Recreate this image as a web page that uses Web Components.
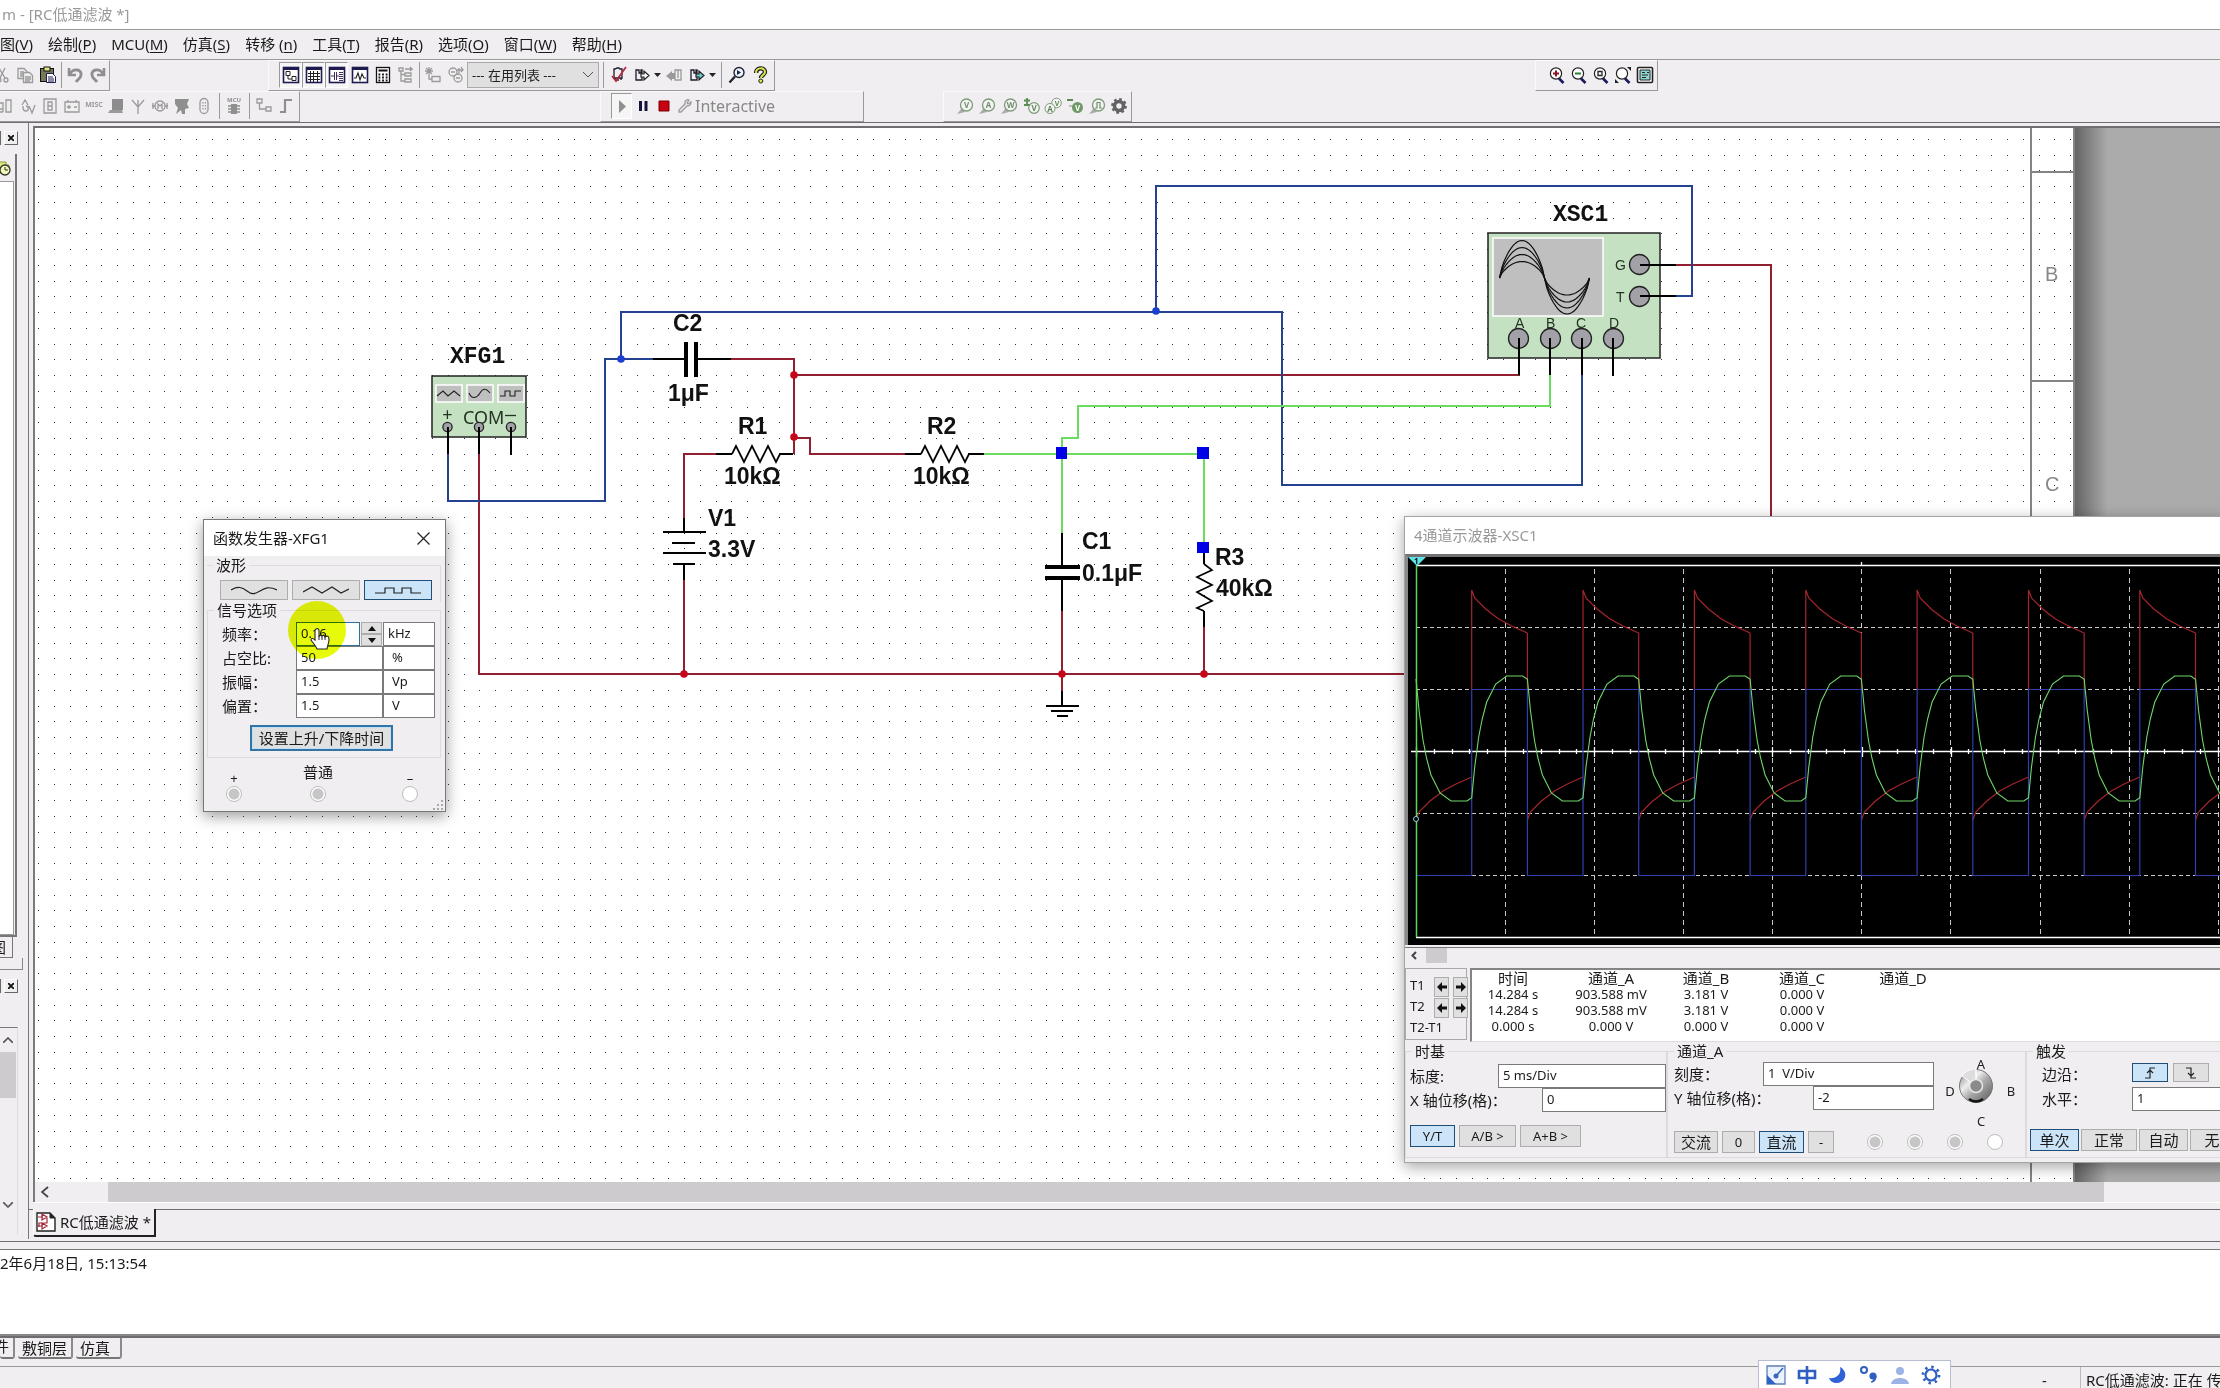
<!DOCTYPE html>
<html lang="zh-CN">
<head>
<meta charset="utf-8">
<title>RC低通滤波</title>
<style>
html,body{margin:0;height:100%;overflow:hidden}
body{font:15px/20px "Noto Sans","Noto Sans CJK SC",sans-serif;color:#1a1a1a;background:#f0eef0}
</style>
</head>
<body>
<circuit-app></circuit-app>
<script>
const BASE = `*{box-sizing:border-box}
button,input,select{font:inherit;color:inherit;margin:0;border-radius:0;outline:0}
button{padding:0;cursor:default}
svg{display:block}`;

function define(name, css, html, setup) {
  customElements.define(name, class extends HTMLElement {
    constructor() {
      super();
      this.attachShadow({ mode: "open" });
    }
    connectedCallback() {
      if (this.ready) return;
      this.ready = true;
      const body = typeof html === "function" ? html(this) : html;
      this.shadowRoot.innerHTML = `<style>${BASE}${css}</style>${body}`;
      if (setup) setup(this.shadowRoot, this);
    }
  });
}

/* ---------- icons, drawn on an 18 x 18 grid ---------- */
const K = 'fill="none" stroke="#1b1b2a" stroke-width="1.3"';
const G = 'fill="none" stroke="#9a9a9a" stroke-width="1.3"';
const NAVY = '<rect x="1.5" y="1.5" width="15" height="15" fill="#fff" stroke="#1c1a4e" stroke-width="1.6"/><path d="M1.5 3h15" stroke="#1c1a4e" stroke-width="2"/>';
const LENS = '<path d="M11 12.5l4.5 4.5" stroke="#1c1a5e" stroke-width="2.6"/><circle cx="8" cy="7.5" r="5.6" fill="#fff" stroke="#222" stroke-width="1.2"/>';
const probe = (t) => `<path d="M1 17l5-6 3 4z" fill="#aaa"/><circle cx="10.5" cy="8" r="6" fill="#f4f4f4" stroke="#7d9c78" stroke-width="1.3"/><text x="10.5" y="11" text-anchor="middle" font-size="8" font-weight="700" fill="#6f8f6a">${t}</text>`;
const ICONS = {
  cut: `<path ${G} d="M12 2L7 12M6 2l6 10"/><circle cx="6" cy="14" r="2" ${G}/><circle cx="13" cy="14" r="2" ${G}/>`,
  copy: `<path ${G} d="M2 2.500h6l3 3v7H2zM4 6h4M4 8h5M4 10h5"/><path d="M7.500 6.500h6l3 3v7h-9z" fill="#f0eef0" stroke="#9a9a9a" stroke-width="1.300"/><path ${G} d="M9 11h6M9 13h6M9 15h5"/>`,
  paste: `<rect x="1.500" y="2.500" width="13" height="13" fill="#77785a" stroke="#111"/><rect x="5" y="1" width="6" height="4" fill="#e6e67e" stroke="#111"/><path d="M7.500 7.500h6l3 3v6h-9z" fill="#fff" stroke="#1c1a4e"/><path d="M9 11h5M9 13h6M9 15h6" stroke="#1c1a4e"/>`,
  undo: `<path d="M3 2v7h7" fill="none" stroke="#8f8f8f" stroke-width="2.600"/><path d="M4 8c3-6 12-5 11 1 0 3-3 4-5 7" fill="none" stroke="#8f8f8f" stroke-width="2.800"/>`,
  redo: `<path d="M15 2v7H8" fill="none" stroke="#8f8f8f" stroke-width="2.600"/><path d="M14 8C11 2 2 3 3 9c0 3 3 4 5 7" fill="none" stroke="#8f8f8f" stroke-width="2.800"/>`,
  hier: NAVY + `<path d="M4 5.500h4v4H4zM10 10.500h4v4h-4zM6 10v3h4" fill="none" stroke="#222"/>`,
  grid: NAVY + `<path d="M3 7.500h12M3 10.500h12M3 13.500h12M5.500 5v11M8.500 5v11M12.500 5v11" stroke="#222"/>`,
  comp: NAVY + `<path d="M3 10h3M6.500 6v8M8.500 6v8M9 10h2M11 6.500h4M11 8.500h4M11 10.500h4M11 12.500h4M11 14.500h4" stroke="#433060"/>`,
  graph: NAVY + `<path d="M3 12h2l2-5 2 7 2-6 2 4h2" fill="none" stroke="#222" stroke-width="1.100"/>`,
  calc: `<rect x="2.500" y="1.500" width="13" height="15" fill="#fff" stroke="#111" stroke-width="1.300"/><path d="M4.500 4.500h9" stroke="#111" stroke-width="2"/><path d="M4.500 8.500h9M4.500 11.500h9M4.500 14.500h9" stroke="#111" stroke-width="2" stroke-dasharray="1.800 1.800"/>`,
  tree: `<path ${G} d="M2 2h4v3H2zM8 3h7l-2-2m2 2l-2 2M8 7h6v3H8zM8 13h6v3H8zM4 5v10h4M4 8.500h4"/>`,
  spark: `<path ${G} d="M5 1v8M1 5h8M2 2l6 6M8 2L2 8M8 10.500h8v5H8zM5 9v4h3"/>`,
  gates: `<circle cx="6" cy="6" r="4" ${G}/><circle cx="11" cy="12" r="4" ${G}/><path ${G} d="M4 6h4M9 12h4M12 2v5M10 4h6M14 1l2 3-2 2"/>`,
  check: `<path ${K} d="M5 3h-1v9h8V3h-2l-1-1H7zM5 14v-2M8 15v-2M11 14v-2"/><path d="M2 10l4 5L16 1" fill="none" stroke="#b3273c" stroke-width="1.700"/>`,
  fwd: `<path ${K} d="M3 4h3v3h2V4h1v10H3z"/><path d="M8 8h3V5l5 4.500-5 4.500v-3H8z" fill="#fff" stroke="#222" stroke-width="1.200"/>`,
  back: `<path ${G} d="M10 4h6v10h-6zM13 4v8"/><path d="M10 7v6H7v2L1 10l6-5v2z" fill="#9a9a9a"/>`,
  fwd2: `<path ${K} d="M3 4h3v3h2V4h1v10H3z"/><path d="M8 8h3V5l5 4.500-5 4.500v-3H8z" fill="#6cc9cf" stroke="#222" stroke-width="1.200"/>`,
  find: `<circle cx="11" cy="6.500" r="5" fill="#e9f4ff" stroke="#223" stroke-width="1.400"/><path d="M9 4v5l4-2.500z" fill="#224"/><path d="M7 10.500L1.500 16.500" stroke="#223" stroke-width="2.400"/>`,
  help: `<path d="M5 7c0-6 9-6 9-1 0 3-4 3-4 6" fill="none" stroke="#222" stroke-width="4.400"/><path d="M5 7c0-6 9-6 9-1 0 3-4 3-4 6" fill="none" stroke="#dbe84a" stroke-width="2"/><circle cx="9.800" cy="15" r="2" fill="#dbe84a" stroke="#222"/>`,
  bus: `<path ${G} d="M6 15V6H2M6 12H2v3h4M9 15V3h5v12z"/>`,
  wave: `<path ${G} d="M3 8l3-5 3 5M4 9c0 3 0 5 3 5s3-5 0-5M10 9l3 7 3-8"/>`,
  cell: `<path ${G} d="M3 2h12v14H3zM7 5h4v4H7zM7 9h4v4H7z"/>`,
  batt: `<path ${G} d="M2 5h14v10H2zM5 5V3M13 5V3M4 10h4M6 8v4M11 10h3"/>`,
  misc: `<text x="9" y="10" text-anchor="middle" font-size="7" font-weight="700" fill="#9a9a9a">MISC</text>`,
  block: `<path d="M5 2h11v11H5z" fill="#8d8d8d"/><path d="M1 16h15l-1-3H3z" fill="#9a9a9a"/>`,
  ant: `<path ${G} d="M9 3v14M3 3l6 7 6-7"/>`,
  motor: `<circle cx="9" cy="9" r="5" ${G}/><path ${G} d="M1 9h3M14 9h3M2 6v6M16 6v6M7 12V7l2 2 2-2v5"/>`,
  chip: `<path d="M2 2h14l-2 5 2 4-4 1v5h-3l-1-4-5 4 2-6-3-4z" fill="#8f8f8f"/>`,
  conn: `<rect x="5" y="1.500" width="8" height="15" rx="4" ${G}/><path ${G} d="M8 5v8M10.500 5v8" stroke-dasharray="1.500 1.500"/>`,
  mcu: `<text x="9" y="5" text-anchor="middle" font-size="6" font-weight="700" fill="#8f8f8f">MCU</text><path d="M6 7h6v10H6z" fill="#8f8f8f"/><path d="M3 9h12M3 12h12M3 15h12" stroke="#8f8f8f" stroke-width="1.400"/>`,
  sub: `<path ${G} d="M2 2h5v4H2zM11 10h5v4h-5zM4.500 6v6H11"/>`,
  step: `<path d="M3 15h5V3h7" fill="none" stroke="#8f8f8f" stroke-width="2.200"/>`,
  play: `<path d="M6 3v13l7-6.500z" fill="#8f8f8f"/>`,
  pause: `<path d="M5 4h3v10H5zM10.500 4h3v10h-3z" fill="#14143c"/>`,
  stop: `<path d="M4 4h10v10H4z" fill="#c9000e" stroke="#7a0008"/>`,
  wrench: `<path d="M3 13l6-6c-1-3 2-5 4-4l-2 3 1 1 3-2c0 3-2 4-4 4l-6 6-2 0z" fill="#eee" stroke="#9a9a9a" stroke-width="1.300"/>`,
  pv: probe("V"), pa: probe("A"), pw: probe("W"),
  pd: `<path d="M5 1v6M2 3.500h6M2 8h6" stroke="#5d8a55" stroke-width="1.800"/><circle cx="12" cy="11" r="5.300" fill="#f4f4f4" stroke="#7d9c78" stroke-width="1.200"/><text x="12" y="14" text-anchor="middle" font-size="8" font-weight="700" fill="#5d8a55">V</text>`,
  pav: `<circle cx="12.500" cy="6" r="4.800" fill="#f4f4f4" stroke="#7d9c78"/><text x="13" y="9" text-anchor="middle" font-size="7" font-weight="700" fill="#5d8a55">V</text><circle cx="6" cy="11.500" r="5" fill="#f4f4f4" stroke="#7d9c78"/><text x="6" y="14.500" text-anchor="middle" font-size="8" font-weight="700" fill="#5d8a55">A</text>`,
  pref: `<path d="M1 3h6" stroke="#5d8a55" stroke-width="2"/><path d="M3 9h4" stroke="#7d9c78"/><circle cx="11.500" cy="10.500" r="5.500" fill="#6f9a68"/><text x="11.500" y="13.500" text-anchor="middle" font-size="8" font-weight="700" fill="#fff">V</text>`,
  pdig: `<path d="M1 17l5-6 3 4z" fill="#aaa"/><circle cx="10.500" cy="8" r="6" fill="#f4f4f4" stroke="#7d9c78" stroke-width="1.300"/><path d="M7 11h2V5.500h3V11h2" fill="none" stroke="#6f8f6a" stroke-width="1.200"/>`,
  gear: `<circle cx="9" cy="9" r="4.500" fill="none" stroke="#626262" stroke-width="3.600"/><circle cx="9" cy="9" r="6.800" fill="none" stroke="#626262" stroke-width="2.200" stroke-dasharray="2.700 2.640"/>`,
  zin: LENS + `<path d="M5 7.500h6M8 4.500v6" stroke="#8d1420" stroke-width="2"/>`,
  zout: LENS + `<path d="M5 7.500h6" stroke="#2f7a35" stroke-width="2"/>`,
  zarea: LENS + `<path d="M6 5.500h4v4H6z" fill="none" stroke="#222" stroke-width="1.300"/>`,
  zfit: LENS + `<path d="M13 1h4v4zM1 13v4h4z" fill="#222"/>`,
  zfull: `<rect x="1.500" y="1.500" width="15" height="15" rx="1" fill="#fff" stroke="#222" stroke-width="1.600"/><path d="M4 4h10v10H4z" fill="#8fd6d2" stroke="#222"/><path d="M6 6.500h3M6 9h6M6 11.500h4M11 6.500h2" stroke="#222"/>`
};

define("tool-button", `
:host{display:flex;flex:none}
button{width:var(--w,22px);height:26px;display:grid;place-items:center;background:none;border:1px solid transparent}
:host([pressed]) button{border-color:#999 #fff #fff #999;background:#f7f6f7}
`, (h) => `<button type="button" aria-label="${h.getAttribute("icon")}"><svg width="18" height="18" viewBox="0 0 18 18" aria-hidden="true">${ICONS[h.getAttribute("icon")]}</svg></button>`);

define("tool-sep", `
:host{display:flex;flex:none;width:4px;height:26px;justify-content:center}
:host([wide]){width:8px}
i{width:1px;background:#999}`, `<i></i>`);

define("tool-caret", `
:host{display:grid;place-items:center;flex:none;width:9px;height:26px}
`, `<svg width="7" height="4" aria-hidden="true"><path d="M0 0h7L3.500 4z" fill="#222"/></svg>`);

define("tool-group", `
:host{display:flex;flex:none;align-items:center;height:31px;border:1px solid;border-color:#fbfafb #999 #999 #fbfafb;padding-left:10px;padding-bottom:2px}
:host([cut]){border-left:0;padding-left:0}
`, `<slot></slot>`);

const tools = (s) => s.split(" ").map(n => n === "|" ? "<tool-sep></tool-sep>" : n === "||" ? "<tool-sep wide></tool-sep>" : n === "v" ? "<tool-caret></tool-caret>" : n[0] === "*" ? `<tool-button pressed icon="${n.slice(1)}"></tool-button>` : `<tool-button icon="${n}"></tool-button>`).join("");

define("tool-rows", `
:host{display:block;flex:none;border-bottom:1px solid #6e6c6e;height:63px}
.row{display:flex;height:31px}
.w23{--w:23px}
.list{display:grid;width:132px;height:26px}
.list>*{grid-area:1/1}
select{appearance:none;border:1px solid #aaa;background:#e1e0e1;font-size:13px;padding:0 4px;color:#222}
.list svg{justify-self:end;align-self:center;margin-right:6px;pointer-events:none}
.a1{width:110px;overflow:hidden}.a1 .in{margin-left:-10px}
.a2{width:300px;overflow:hidden}.a2 .in{margin-left:-5px}
.in{display:flex;align-items:center}
.b1{width:507px;margin-left:158px}.c1{width:123px;margin-left:760px}
.b2{width:264px;margin-left:300px;color:#888;font-size:16px;--w:21px}.c2{width:189px;margin-left:79px}
`, `<div class="row">
<tool-group cut class="a1 w23"><div class="in">${tools("cut copy paste | undo redo")}</div></tool-group>
<tool-group class="b1 w23">${tools("*hier *grid *comp graph calc tree | spark gates")}
<span class="list"><select aria-label="在用列表"><option>--- 在用列表 ---</option></select><svg width="10" height="6" aria-hidden="true"><path d="M0 0l5 5 5-5" fill="none" stroke="#555"/></svg></span>
${tools("|| check fwd v back fwd2 v || find help")}</tool-group>
<tool-group class="c1">${tools("zin zout zarea zfit zfull")}</tool-group>
</div><div class="row">
<tool-group cut class="a2"><div class="in">${tools("bus wave cell batt misc block ant motor chip conn || mcu || sub step")}</div></tool-group>
<tool-group class="b2">${tools("*play pause stop wrench")}<span>Interactive</span></tool-group>
<tool-group class="c2">${tools("pv pa pw pd pav pref pdig gear")}</tool-group>
</div>`);

define("title-bar", `:host{display:flex;flex:none;align-items:center;height:30px;padding:0 2px 2px;background:#fff;color:#999;border-bottom:1px solid #999;white-space:pre;overflow:hidden}`, `<slot></slot>`);

define("menu-bar", `
:host{display:flex;flex:none;height:30px;align-items:center;border-bottom:1px solid #999;padding-bottom:2px}
nav{display:flex;gap:15px}
button{border:0;background:none;white-space:nowrap;line-height:20px}
u{text-underline-offset:2px}
`, `<nav>${["图(V)", "绘制(P)", "MCU(M)", "仿真(S)", "转移 (n)", "工具(T)", "报告(R)", "选项(O)", "窗口(W)", "帮助(H)"].map(t => `<button type="button">${t.replace(/\((.)\)/, "(<u>$1</u>)")}</button>`).join("")}</nav>`);

define("side-dock", `
:host{display:flex;flex-direction:column;flex:none;width:29px;border-right:1px solid #777;overflow:hidden;margin-bottom:2px}
.bar{display:flex;gap:3px;height:14px;flex:none}
.bar.first{margin-top:8px}
.bar button{width:14px;height:14px;border:1px solid;border-color:#fff #666 #666 #fff;background:#f0eef0;display:grid;place-items:center}
.bar i{width:1px;background:#666}
.tree{flex:1;margin-top:9px;width:17px;border-right:2px solid #777;border-bottom:2px solid #777;display:flex;flex-direction:column}
.head{height:27px;display:flex;align-items:center}
.leaf{flex:1;background:#fff;border:1px solid #999;border-left:0;margin-right:1px}
.tab{width:13px;height:21px;border:1px solid #777;border-width:0 1px 1px 0;display:flex;justify-content:flex-end;padding-right:6px;overflow:hidden}
.edge{width:23px;height:12px;border:1px solid #888;border-width:0 1px 1px 0;margin-bottom:9px;flex:none}
.low{flex:none;height:208px;width:18px;margin-top:34px;border:1px solid #777;border-width:1px 0 0;border-right:1px solid #ddd;display:flex;flex-direction:column}
.low button{height:24px;width:16px;border:0;background:none;display:grid;place-items:center}
.thumb{height:46px;width:16px;background:#cdcbcd}
.sp{flex:1}
.pad{height:4px}
.low .pad{height:18px}
`, `<div class="bar first"><i></i><button type="button" aria-label="关闭"><svg width="6" height="6"><path d="M0 0l6 6M6 0L0 6" stroke="#111" stroke-width="1.800"/></svg></button></div>
<div class="tree"><div class="head"><svg width="12" height="18" viewBox="0 0 12 18"><path d="M0 3h6v3h3v8H0" fill="#dce87c" stroke="#8a9a3c"/><circle cx="5" cy="11" r="5" fill="#f1f7b4" stroke="#333" stroke-width="1.300"/><path d="M5 8v3h3" fill="none" stroke="#333"/></svg></div><div class="leaf"></div></div>
<div class="tab">图</div><div class="edge"></div>
<div class="bar"><i></i><button type="button" aria-label="关闭"><svg width="6" height="6"><path d="M0 0l6 6M6 0L0 6" stroke="#111" stroke-width="1.800"/></svg></button></div>
<div class="low"><button type="button" aria-label="上"><svg width="10" height="6"><path d="M0 6l5-5 5 5" fill="none" stroke="#555" stroke-width="1.600"/></svg></button><div class="thumb"></div><div class="sp"></div><button type="button" aria-label="下"><svg width="10" height="6"><path d="M0 0l5 5 5-5" fill="none" stroke="#555" stroke-width="1.600"/></svg></button><div class="pad"></div></div><div class="pad"></div>`);

/* ---------- schematic sheet ---------- */
const range = (n) => Array.from({ length: n }, (_, i) => i);
const dots = range(130).map(i => range(67).map(j => `M${Math.round(38.4 + i * 15.75)} ${Math.round(139 + j * 15.74)}h1v1h-1z`).join("")).join("");
const wire = (c, ...ds) => `<path d="${ds.join("")}" fill="none" stroke="${c}" stroke-width="2"/>`;
const dot = (c, x, y) => `<circle cx="${x}" cy="${y}" r="3.800" fill="${c}"/>`;
const label = (x, y, t) => `<text x="${x}" y="${y}" class="l">${t}</text>`;
const jack = (x, y, r) => `<circle cx="${x}" cy="${y}" r="${r}" fill="#a3a1a8" stroke="#222" stroke-width="1.300"/>`;
const BLUE = "#24428f", RED = "#911f30", GREEN = "#6bdc5f", BLK = "#000";
const zig = (x) => `M${x} 454l4 -8 8 16 8 -16 8 16 8 -16 8 16 4 -8`;
const swing = (top, low) => range(41).map(i => {
  const t = i / 40, s = Math.sin(2 * Math.PI * t), a = Math.pow(Math.abs(s), 0.7);
  return `${i ? "L" : "M"}${(1499.5 + 90 * t).toFixed(1)} ${(278 + (s > 0 ? top - 278 : low - 278) * a).toFixed(1)}`;
}).join("");

define("schematic-sheet", `
:host{display:block;flex:1;min-height:0;background:#fff;overflow:hidden}
svg{width:100%;height:100%}
text{font-family:"Liberation Sans",sans-serif}
.l{font-size:23px;font-weight:700;fill:#111}
.m{font-family:"Liberation Mono",monospace;font-size:23px;font-weight:700;fill:#111}
.s{font-size:14px;fill:#243424}
.z{font-size:20px;fill:#888}
.c{font-family:"Noto Sans",sans-serif;font-size:18px;fill:#243424}
`, `<svg aria-label="电路图"><defs><linearGradient id="sh"><stop offset="0" stop-color="#606060"/><stop offset="1" stop-color="#ababab"/></linearGradient></defs>
<g transform="translate(-35 -128)">
<rect x="2073" y="100" width="600" height="1200" fill="#ababab"/><rect x="2073" y="100" width="35" height="1200" fill="url(#sh)"/>
<path d="${dots}" fill="#333" shape-rendering="crispEdges"/>
<path d="M2031 120v1100M2031 172h43M2031 381h43M2074 120v1100" fill="none" stroke="#858385" stroke-width="2"/>
<text x="2045" y="281" class="z">B</text><text x="2045" y="491" class="z">C</text>
<rect x="432" y="376" width="94" height="61" fill="#c4e2c1" stroke="#222" stroke-width="1.500"/>
<g fill="#bfbfbf" stroke="#fff" stroke-width="1.500"><path d="M436 385h26v17h-26zM467 385h26v17h-26zM498 385h26v17h-26z"/></g>
<g fill="none" stroke="#222" stroke-width="1.100"><path d="M437 396l6-5 5 5 6-5 6 5M469 393c3 7 8 5 11 0s6-5 10 0M500 396h5v-5h5v5h5v-5h6"/></g>
<text x="447.500" y="421" class="c" text-anchor="middle">+</text><text x="463" y="424" class="c">COM</text><path d="M505 415.500h11" stroke="#243424" stroke-width="1.300"/>
${jack(447.5, 427, 4.6)}${jack(479, 427, 4.6)}${jack(511, 427, 4.6)}
<text x="450" y="363" class="m">XFG1</text>
<rect x="1488" y="233" width="172" height="125" fill="#c4e2c1" stroke="#222" stroke-width="1.500"/>
<rect x="1493" y="238" width="110" height="78" fill="#bfbfbf" stroke="#fff" stroke-width="1.500"/>
<g fill="none" stroke="#111" stroke-width="1.200">${[[240.5, 314], [247.5, 308], [254.5, 302], [261.5, 295]].map(([a, b]) => `<path d="${swing(a, b)}"/>`).join("")}</g>
<text x="1615" y="270" class="s">G</text><text x="1616" y="302" class="s">T</text><text x="1515" y="328" class="s">A</text><text x="1546" y="328" class="s">B</text><text x="1576" y="328" class="s">C</text><text x="1609" y="328" class="s">D</text>
${jack(1639.5, 264.5, 10)}${jack(1639.5, 296.5, 10)}${[1518.5, 1550.5, 1581.5, 1613.5].map(x => jack(x, 338.5, 10)).join("")}
<text x="1553" y="221" class="m">XSC1</text>
${wire(RED, "M731 359H794V454", "M794 375H1519", "M794 438H810V454H905", "M716 454H684V518", "M684 580V674", "M479 454V674H1420", "M1062 611V691", "M1204 627V674", "M1676 265H1771V530")}
${wire(BLUE, "M1156 312V186H1692V296H1676", "M621 359V312H1282V485H1582V375", "M653 359H605V501H448V454")}
${wire(GREEN, "M984 454H1204V550", "M1062 533V438H1078V406H1550V375")}
${wire(BLK, "M448 427V454M479 427V454M511 427V455", "M653 359H686M696 359H731", "M716 454H732M779 454H793", "M905 454H921M968 454H984", "M684 518V531M663 532H706M672 543H695M663 553H706M673 564H695M684 564V580", "M1062 533V566M1062 578V611M1062 691V705M1046 706H1079M1051 711H1073M1057 716H1068", "M1204 550V564M1204 611V627", "M1519 338V375M1550 338V375M1582 338V375M1613 338V376M1640 265H1676M1640 296H1676")}
<path d="${zig(732)}${zig(921)}M1204 564l8 6-15 7 15 8-15 7 15 9-15 7 7 3" fill="none" stroke="#000" stroke-width="1.700"/>
<path d="M686 342v35M696 342v35M1045 567h35M1045 578h35" stroke="#000" stroke-width="4"/>
${dot("#1b3fd0", 621, 359)}${dot("#1b3fd0", 1156, 311)}${[[794, 375], [794, 437], [684, 674], [1062, 674], [1204, 674]].map(p => dot("#c8061a", ...p)).join("")}
<path d="M1056 447h11v12h-11zM1197 447h12v12h-12zM1197 542h12v11h-12z" fill="#0000e6"/>
${label(673, 331, "C2")}${label(668, 401, "1μF")}${label(738, 434, "R1")}${label(724, 484, "10kΩ")}${label(927, 434, "R2")}${label(913, 484, "10kΩ")}${label(708, 526, "V1")}${label(708, 557, "3.3V")}${label(1082, 549, "C1")}${label(1082, 581, "0.1μF")}${label(1215, 565, "R3")}${label(1216, 596, "40kΩ")}
</g></svg>`);

define("work-area", `
:host{display:flex;flex-direction:column;flex:1;min-width:0;padding-top:3px}
.frame{flex:1;min-height:0;display:flex;flex-direction:column;margin-left:4px;border:2px solid #6f6d70;border-width:2px 0 0 2px;border-left-color:#7b797c}
.scroll{display:flex;height:20px;flex:none;background:#f0eef0}
.scroll button{width:73px;border:0;background:none;text-align:left;padding-left:6px}
.thumb{flex:1;background:#cdcbcd}
.rest{width:116px}
.line{height:7px;border-top:1px solid #fff;margin-left:4px;flex:none}
.tabs{flex:none;height:32px;border-top:1px solid #6e6c6e;display:flex}
.tab{display:flex;align-items:center;gap:4px;height:28px;width:123px;margin:-1px 0 0 4px;padding-left:2px;background:#f0eef0;border:2px solid #222;border-width:0 2px 2px 1px;border-left-color:#fff;border-radius:0 0 0 3px;white-space:nowrap}
`, `<div class="frame"><schematic-sheet></schematic-sheet><div class="scroll"><button type="button" aria-label="左"><svg width="8" height="12"><path d="M7 1L1 6l6 5" fill="none" stroke="#444" stroke-width="1.800"/></svg></button><div class="thumb"></div><div class="rest"></div></div></div>
<div class="line"></div>
<div class="tabs"><button class="tab" type="button"><svg width="20" height="20" viewBox="0 0 20 20"><path d="M1 1h13l5 5v13H1z" fill="#fff" stroke="#222" stroke-width="1.400"/><path d="M14 1v5h5" fill="#222" stroke="#222"/><path d="M2 5h5M2 14h5M6 2v6l5-3zM6 11v6l5-3zM3 15v-4h8V6" fill="none" stroke="#a32438" stroke-width="1.200"/></svg><span>RC低通滤波 *</span></button></div>`);

define("log-panel", `
:host{display:block;flex:none;border-top:1px solid #6e6c6e;padding-top:7px}
.log{height:87px;background:#fff;border-top:1px solid #777;border-bottom:2px solid #888;padding-top:3px;overflow:hidden}
.tabs{display:flex;height:30px;border-top:2px solid #6e6c6e;gap:3px}
.tabs button{height:21px;border:1px solid #777;border-width:0 2px 2px 0;border-right-color:#8a8a8a;background:#f0eef0;border-radius:0 0 3px 3px;padding:0 4px;line-height:16px;white-space:nowrap}
.tabs button:first-child{width:15px;display:flex;justify-content:flex-end}
.tabs button:last-child{padding-right:10px}
`, `<div class="log">2年6月18日, 15:13:54</div><div class="tabs"><button type="button">件</button><button type="button">敷铜层</button><button type="button">仿真</button></div>`);

define("status-line", `
:host{display:flex;flex:none;justify-content:flex-end;height:22px;border-top:1px solid #999;overflow:hidden;white-space:nowrap}
span{line-height:26px}
.dash{width:38px}
.msg{border-left:1px solid #bbb;padding-left:5px;width:140px}
`, `<span class="dash">-</span><span class="msg">RC低通滤波: 正在 传</span>`);

define("ime-strip", `
:host{position:absolute;left:1758px;bottom:0;width:193px;height:28px;background:#fff;border:1px solid #b9bdd2;border-bottom:0;display:flex;align-items:center;gap:9px;padding-left:6px}
button{width:22px;height:26px;border:0;background:none;display:grid;place-items:center}
`, () => {
  const b = (n, s) => `<button type="button" aria-label="${n}"><svg width="20" height="20" viewBox="0 0 20 20">${s}</svg></button>`;
  return b("输入法", `<path d="M1 1h18v18H1z" fill="#eaf2fd" stroke="#5d7fb8" stroke-width="1.300"/><path d="M1 10l9 9H1z" fill="#2f62c8"/><circle cx="10" cy="11" r="2.500" fill="#3b66b8"/><path d="M10 11l7-8" stroke="#3b66b8" stroke-width="1.600"/>`)
    + b("中文", `<path d="M2 6h16v7H2zM10 1v18" fill="none" stroke="#2f5fc0" stroke-width="2.600"/>`)
    + b("全半角", `<path d="M12 2c8 4 7 15-3 16-4 0-7-2-8-5 6 1 13-3 11-11z" fill="#2f62d6"/>`)
    + b("标点", `<circle cx="5" cy="5" r="3" fill="none" stroke="#2f5fc0" stroke-width="2"/><circle cx="14" cy="11" r="3.600" fill="#2f5fc0"/><path d="M17.500 11c0 4-2 6-5 7l-.500-1.500c2-1 2.500-2 2.500-4z" fill="#2f5fc0"/>`)
    + b("用户", `<circle cx="10" cy="6" r="4" fill="#9db3e6"/><path d="M1 19c1-8 17-8 18 0z" fill="#9db3e6"/>`)
    + b("设置", `<circle cx="10" cy="10" r="5.500" fill="none" stroke="#2f5fc0" stroke-width="2.200"/><circle cx="10" cy="10" r="8" fill="none" stroke="#2f5fc0" stroke-width="2.800" stroke-dasharray="2.400 3.883"/>`);
});

/* ---------- shared parts of the instrument windows ---------- */
define("group-box", `
:host{display:block;min-width:0}
fieldset{height:100%;margin:0;border:1px solid #dcdadc;padding:0;min-width:0}
:host([open]) fieldset{border-bottom:0;border-left:0}
legend{line-height:16px;padding:0 3px;margin-left:6px;white-space:nowrap}
`, (h) => `<fieldset><legend>${h.getAttribute("label")}</legend><slot></slot></fieldset>`);

define("value-field", `
:host{display:flex;align-items:center;height:24px}
label{flex:1;white-space:nowrap;line-height:20px}
input{flex:none;width:var(--fw,168px);height:24px;border:1px solid #7a7a7a;background:#fff;padding:0 0 2px 4px;font-size:13px}
:host([hot]) input{border-color:#2f6f9b}
`, (h) => `<label for="f">${h.getAttribute("label")}</label><input id="f" value="${h.getAttribute("value")}"><slot></slot>`);

define("push-key", `
:host{display:flex;flex:none}
button{width:100%;height:100%;border:1px solid #adadad;background:#e1e0e1;display:grid;place-items:center;line-height:18px;white-space:nowrap}
:host([on]) button{background:#cce4f7;border-color:#1f4e79}
:host([focus]) button{border:2px solid #3174a5;box-shadow:inset 0 0 0 1px #bfe0f5}
`, (h) => `<button type="button" aria-label="${h.getAttribute("name") || h.textContent}"><slot></slot></button>`);

define("jack-dot", `
:host{display:block;flex:none;width:16px;height:16px}
input{appearance:none;display:block;margin:0;width:16px;height:16px;border-radius:50%;border:1px solid #bdbdbd;background:radial-gradient(circle,#c6c6c6 0 5px,#fff 6px)}
input:disabled{background:#fff}
`, (h) => `<input type="radio" aria-label="${h.getAttribute("name")}" ${h.hasAttribute("empty") ? "disabled" : ""}>`);

define("function-generator", `
:host{position:absolute;left:203px;top:519px;width:243px;background:#f0eef0;border:1px solid #777;box-shadow:0 4px 14px rgba(0,0,0,.4);height:293px}
header{height:36px;background:#fff;display:flex;align-items:center;justify-content:space-between;padding:0 15px 0 9px}
header button{border:0;background:none;width:13px;height:13px}
.body{padding:1px 4px 0 3px}
.waves{display:flex;gap:4px;padding:7px 0 2px 13px}
.waves push-key{width:68px;height:20px}
.rows{padding:4px 3px 0 14px}
.row{display:flex}
value-field{width:161px;--fw:87px}
value-field[hot]{--fw:64px;width:138px}
.spin{display:flex;flex-direction:column;width:23px;padding:0 1px}
.spin push-key{height:12px}
.row>input{width:52px;height:24px;border:1px solid #7a7a7a;background:#fff;font-size:13px;padding:0 0 2px 8px}
.row:first-child>input{padding-left:4px}
.set{width:143px;height:26px;margin:7px auto 6px 28px}
footer{display:flex;align-items:flex-end;justify-content:space-between;padding:0 27px 0 22px;height:44px;line-height:16px}
footer div{display:flex;flex-direction:column;align-items:center;width:16px;font-size:13px}
footer .mid{font-size:15px;white-space:nowrap;gap:6px;margin-left:-8px}
.grip{position:absolute;right:1px;bottom:1px}
.glow{position:absolute;left:84px;top:81px;width:58px;height:58px;border-radius:50%;background:#e6fa0a;mix-blend-mode:multiply;pointer-events:none}
.hand{position:absolute;left:106px;top:107px;pointer-events:none}
`, () => {
  const w = (d) => `<svg width="46" height="10" aria-hidden="true"><path d="${d}" fill="none" stroke="#222" stroke-width="1.200"/></svg>`;
  return `<header><span>函数发生器-XFG1</span><button type="button" aria-label="关闭"><svg width="13" height="13"><path d="M.5 .5l12 12M12.500 .5l-12 12" stroke="#222" stroke-width="1.200"/></svg></button></header>
<div class="body"><group-box open label="波形"><div class="waves"><push-key name="正弦波">${w("M0 5c7-4 11-3 16 1s8 3 13 0 9-5 17-1")}</push-key><push-key name="三角波">${w("M0 7l9-5 10 6 10-6 9 6 8-4")}</push-key><push-key on name="方波">${w("M0 8h10V3h9v5h8V3h9v5h10")}</push-key></div></group-box>
<group-box label="信号选项"><div class="rows">
<div class="row"><value-field hot label="频率：" value="0.16"></value-field><div class="spin"><push-key name="增"><svg width="8" height="5"><path d="M0 5h8L4 0z" fill="#111"/></svg></push-key><push-key name="减"><svg width="8" height="5"><path d="M0 0h8L4 5z" fill="#111"/></svg></push-key></div><input aria-label="频率单位" value="kHz"></div>
<div class="row"><value-field label="占空比:" value="50"></value-field><input aria-label="占空比单位" value="%"></div>
<div class="row"><value-field label="振幅：" value="1.5"></value-field><input aria-label="振幅单位" value="Vp"></div>
<div class="row"><value-field label="偏置：" value="1.5"></value-field><input aria-label="偏置单位" value="V"></div>
<push-key focus class="set">设置上升/下降时间</push-key></div></group-box></div>
<footer><div>+<jack-dot name="+"></jack-dot></div><div class="mid">普通<jack-dot name="普通"></jack-dot></div><div>–<jack-dot empty name="-"></jack-dot></div></footer>
<svg class="grip" width="11" height="11"><path d="M8 1h2v2H8zM8 5h2v2H8zM4 5h2v2H4zM8 9h2v2H8zM4 9h2v2H4zM0 9h2v2H0z" fill="#aaa"/></svg>
<div class="glow"></div>
<svg class="hand" width="20" height="24" viewBox="0 0 20 24"><path d="M6 2c2-1 3 0 3 2v5l2-1 1 1 2-1 1 2 2-1c2 0 2 2 2 4 0 4-2 6-2 9H7c-1-3-4-6-6-9 0-2 2-2 4 0V4c0-1 0-2 1-2z" fill="#fff" stroke="#222" stroke-width="1.100"/><path d="M9 9v4M12 9v4M15 10v3" stroke="#222"/></svg>`;
});

/* ---------- oscilloscope ---------- */
const HP = 55.68, X0 = 1417;
const path = (pts) => pts.map(([x, y], i) => (i ? "L" : "M") + x.toFixed(1) + " " + y).join("");
const traces = { r: [], g: [], b: [] };
const DECAY = [[0, 820], [3, 812], [14, 801], [27, 791], [40, 784], [HP, 777]];
const FALL = [[0, 679], [3, 710], [7, 740], [10.5, 758], [15, 775], [24, 793], [35, 801], [51, 801], [HP - .5, 798]];
for (let k = 0; k < 16; k++) {
  const x = X0 + k * HP, up = k % 2 === 1;
  traces.b.push([x, up ? 689.5 : 875.5], [x + HP, up ? 689.5 : 875.5]);
  for (const [dx, y] of DECAY) traces.r.push([x + dx, up ? 1410 - y : y]);
  for (const [dx, y] of FALL) traces.g.push([x + dx, up ? 1477 - y : y]);
}
/* the red trace is hidden by the blue one below the upper blue level */
const redArcs = range(16).map(k => path(traces.r.slice(k * 6, k * 6 + 6))).join("");
const redEdges = range(15).map(k => {
  const x = (X0 + (k + 1) * HP).toFixed(1);
  return k % 2 ? `M${x} 633V689` : `M${x} 590V689`;
}).join("");
define("scope-plot", `
:host{display:block;height:391px;background:#000;border-top:3px solid #737173;border-left:3px solid #8a888a;overflow:hidden}
svg{width:100%;height:100%}
`, `<svg aria-label="波形"><g transform="translate(-1409 -557)" fill="none">
<g stroke="#c8c8c8" stroke-dasharray="5 4">${range(10).map(i => `<path d="M${Math.round(1416.8 + 89.1 * (i + 1)) + .5} 569V937"/>`).join("")}</g>
<g stroke="#c8c8c8" stroke-dasharray="4 3">${[627.5, 689.5, 813.5, 875.5].map(y => `<path d="M1417 ${y}H2300"/>`).join("")}</g>
<path d="M1417 565.500H2300M1412 751.500H2300M1417 937.500H2300M1862.500 562v4${range(48).map(i => `M${Math.round(1417 + 17.82 * i) + .5} ${i % 5 ? 749 : 747}v${i % 5 ? 5 : 10}`).join("")}" stroke="#fff" stroke-width="1.300"/>
<path d="${redArcs}${redEdges}" stroke="#a3262c" stroke-width="1.200"/>
<path d="${path(traces.b)}" stroke="#2f3fae" stroke-width="1.200"/>
<path d="${path(traces.g)}" stroke="#70d868" stroke-width="1.100"/>
<path d="M1417.500 565V937" stroke="#5fd35a" stroke-width="1.500"/>
<path d="M1409 557h18l-9 9z" fill="#5fe3e6"/><text x="1415" y="564" font-size="8" font-weight="700" fill="#111">1</text>
<circle cx="1417" cy="819" r="2.500" fill="#000" stroke="#8fd0e0"/>
</g></svg>`);

define("oscilloscope-window", `
:host{position:absolute;left:1404px;right:-90px;top:516px;height:647px;background:#f0eef0;border:1px solid #a5a3a5;box-shadow:0 4px 14px rgba(0,0,0,.35);display:flex;flex-direction:column}
header{height:37px;flex:none;background:#fff;color:#999;padding:8px 9px 0;line-height:20px}
scope-plot{flex:none}
.scroll{height:21px;flex:none;border-top:1px solid #777;margin-top:2px;display:flex;align-items:flex-start}
.scroll button{width:21px;height:14px;border:0;background:none;padding-left:6px}
.scroll i{width:21px;height:15px;background:#cdcbcd}
.read{display:flex;gap:3px;height:74px;flex:none}
.cur{width:62px;height:72px;border:1px solid #aaa;padding:8px 0 0 4px;font-size:13px;display:grid;grid-template-columns:20px 15px 15px;column-gap:4px;grid-template-rows:20px 20px 20px;row-gap:1px;line-height:17px}
.cur push-key{height:20px}
.cur .wide{grid-column:1/4}
.tbl{flex:1;background:#fff;border:2px solid #858385;border-right:0;border-bottom:1px solid #ddd}
table{border-collapse:collapse;table-layout:fixed;width:474px;text-align:center}
th{font-weight:400;line-height:16px;padding:0}
td{padding:0;font-size:13px;line-height:16px;white-space:nowrap}
.groups{display:grid;grid-template-columns:262px 359px 1fr;height:116px;padding-top:1px}
.keys{display:flex;gap:4px}
.keys push-key{height:22px;font-size:13px}
.keys push-key.cn{font-size:15px}
.tb{padding:5px 0 0 4px}
.tb value-field+value-field{--fw:124px}
.tb .keys{margin-top:13px}
.ch{padding-left:6px}
.top{display:flex;height:72px}
.fields{width:260px;padding-top:3px}
.fields value-field{--fw:171px}.fields value-field+value-field{--fw:121px}
.knob{margin-left:4px}
.dots{display:flex;gap:24px;align-items:center;margin-left:29px}
.tr{padding:4px 0 0 3px}
.edge{display:flex;padding-left:12px;height:24px;gap:5px}
.edge span{width:85px;line-height:22px}
.edge push-key{width:36px;height:19px}
.tr value-field{width:200px;padding-left:12px;--fw:98px}
.tr .keys{margin-top:18px;gap:2px}
text{font-size:13px;fill:#222;text-anchor:middle}
`, `<header>4通道示波器-XSC1</header><scope-plot></scope-plot>
<div class="scroll"><button type="button" aria-label="左"><svg width="6" height="9"><path d="M5 1L1.500 4.500 5 8" fill="none" stroke="#444" stroke-width="2"/></svg></button><i></i></div>
<div class="read"><div class="cur">${["T1", "T2"].map(t => `<span>${t}</span><push-key name="${t} 左"><svg width="10" height="10"><path d="M0 5l5-5v3.500h5v3H5V10z" fill="#111"/></svg></push-key><push-key name="${t} 右"><svg width="10" height="10"><path d="M10 5L5 0v3.500H0v3h5V10z" fill="#111"/></svg></push-key>`).join("")}<span class="wide">T2-T1</span></div>
<div class="tbl"><table><colgroup><col style="width:82px"><col style="width:114px"><col style="width:76px"><col style="width:116px"><col style="width:86px"></colgroup>
<tr><th>时间</th><th>通道_A</th><th>通道_B</th><th>通道_C</th><th>通道_D</th></tr>
<tr><td>14.284 s</td><td>903.588 mV</td><td>3.181 V</td><td>0.000 V</td><td></td></tr>
<tr><td>14.284 s</td><td>903.588 mV</td><td>3.181 V</td><td>0.000 V</td><td></td></tr>
<tr><td>0.000 s</td><td>0.000 V</td><td>0.000 V</td><td>0.000 V</td><td></td></tr></table></div></div>
<div class="groups">
<group-box label="时基"><div class="tb"><value-field label="标度:" value="5 ms/Div"></value-field><value-field label="X 轴位移(格)：" value="0"></value-field>
<div class="keys"><push-key on style="width:45px">Y/T</push-key><push-key style="width:57px">A/B &gt;</push-key><push-key style="width:61px">A+B &gt;</push-key></div></div></group-box>
<group-box label="通道_A"><div class="ch"><div class="top"><div class="fields"><value-field label="刻度：" value="1  V/Div"></value-field><value-field label="Y 轴位移(格)：" value="-2"></value-field></div>
<svg class="knob" width="80" height="72" viewBox="0 0 80 72"><defs><linearGradient id="k" x1="0" y1="0" x2="1" y2="1"><stop offset="0" stop-color="#777"/><stop offset=".35" stop-color="#eee"/><stop offset=".55" stop-color="#aaa"/><stop offset="1" stop-color="#555"/></linearGradient></defs>
<circle cx="38" cy="27" r="16.500" fill="url(#k)" stroke="#777"/><path d="M38 27V11M38 27L24 17a16 16 0 0 1 14-7z" fill="#ddd" stroke="#fff"/><circle cx="38" cy="27" r="6.500" fill="#8a8a8a" stroke="#e8e8e8" stroke-width="1.500"/><path d="M31 40q7 5 14 0" fill="none" stroke="#111" stroke-width="2.400"/>
<text x="43" y="10">A</text><text x="73" y="37">B</text><text x="43" y="67">C</text><text x="12" y="37">D</text></svg></div>
<div class="keys"><push-key class="cn" style="width:44px">交流</push-key><push-key style="width:33px">0</push-key><push-key on class="cn" style="width:45px">直流</push-key><push-key style="width:26px">-</push-key>
<div class="dots"><jack-dot name="A"></jack-dot><jack-dot name="B"></jack-dot><jack-dot name="C"></jack-dot><jack-dot empty name="D"></jack-dot></div></div></div></group-box>
<group-box label="触发"><div class="tr"><div class="edge"><span>边沿：</span><push-key on name="上升沿"><svg width="10" height="12"><path d="M0 11h5V1h5M2 6l3-3 3 3" fill="none" stroke="#222" stroke-width="1.200"/></svg></push-key><push-key name="下降沿"><svg width="10" height="12"><path d="M0 1h5v10h5M2 6l3 3 3-3" fill="none" stroke="#222" stroke-width="1.200"/></svg></push-key></div>
<value-field label="水平：" value="1"></value-field>
<div class="keys"><push-key on class="cn" style="width:49px">单次</push-key><push-key class="cn" style="width:56px">正常</push-key><push-key class="cn" style="width:49px">自动</push-key><push-key class="cn" style="width:44px">无</push-key></div></div></group-box>
</div>`);

define("circuit-app", `
:host{position:relative;display:flex;flex-direction:column;height:100vh;overflow:hidden}
main{flex:1;min-height:0;display:flex}
`, `<title-bar>m - [RC低通滤波 *]</title-bar><menu-bar></menu-bar><tool-rows></tool-rows>
<main><side-dock></side-dock><work-area></work-area></main>
<log-panel></log-panel><status-line></status-line>
<oscilloscope-window></oscilloscope-window><function-generator></function-generator><ime-strip></ime-strip>`);
</script>
</body>
</html>
